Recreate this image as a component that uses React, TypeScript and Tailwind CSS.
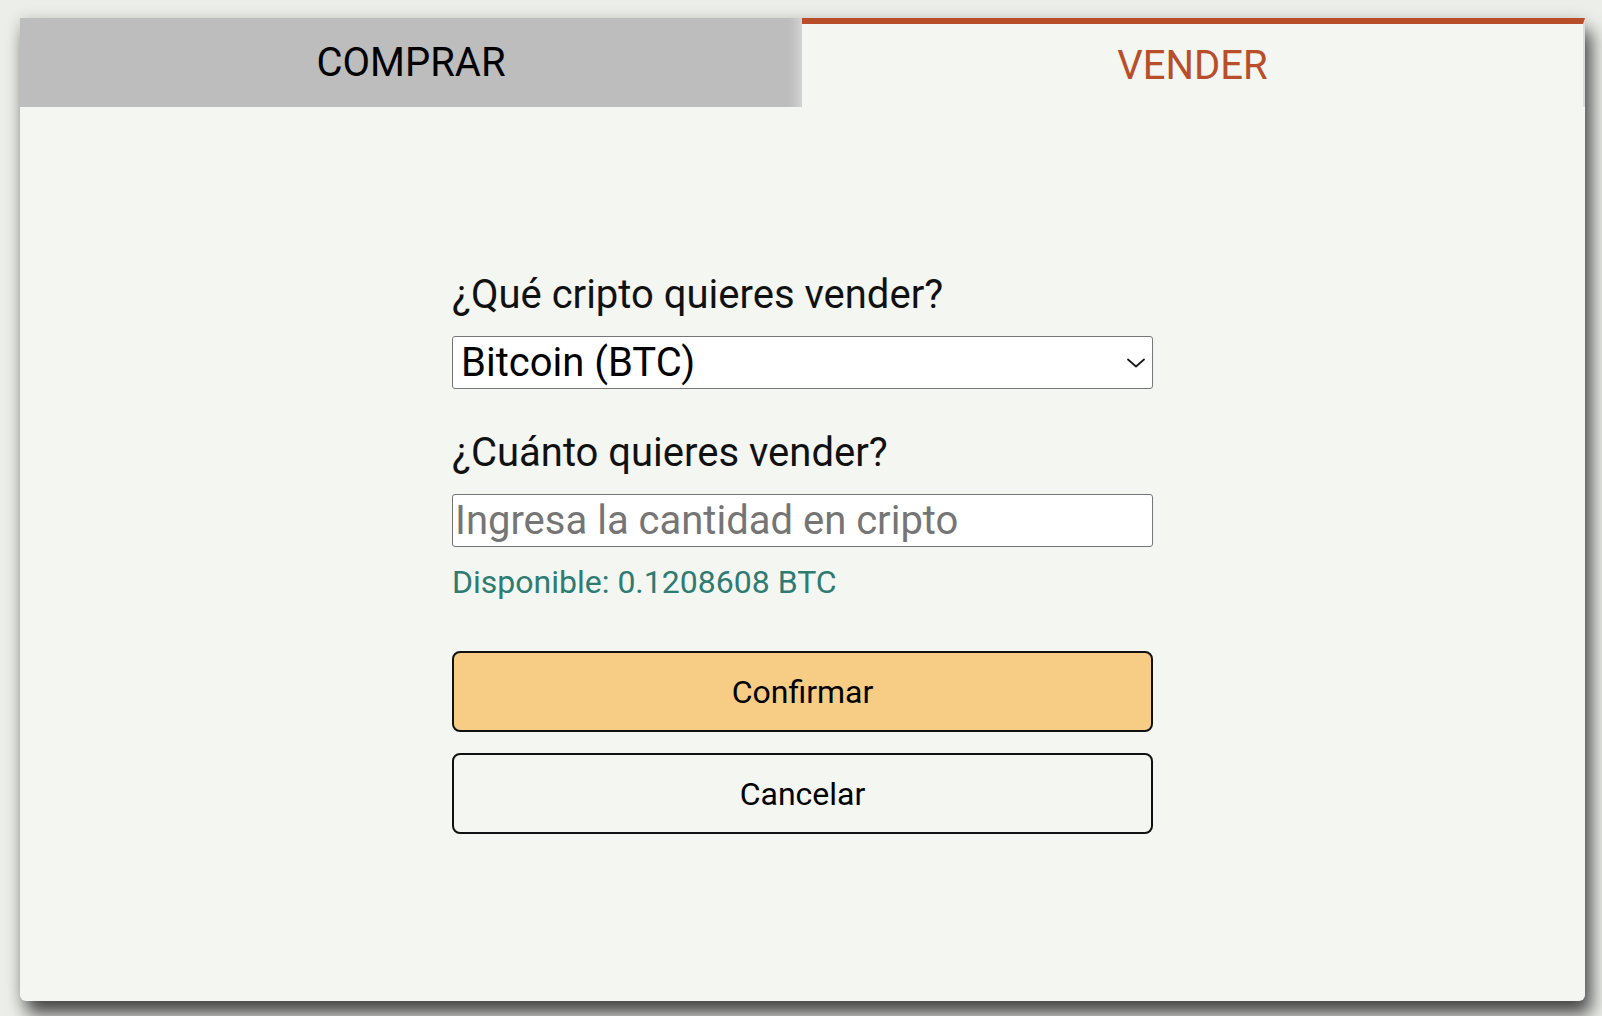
import React, { useState } from "react";

const font = { fontFamily: "Roboto, 'Noto Sans', Arial, sans-serif" };

function Chevron() {
  return (
    <svg width="18" height="10" viewBox="0 0 18 10" fill="none" className="pointer-events-none">
      <path d="M1 1.5 L9 8.5 L17 1.5" stroke="#1a1a1a" strokeWidth="1.8" strokeLinecap="round" strokeLinejoin="round" />
    </svg>
  );
}

export default function App() {
  const [tab, setTab] = useState<"comprar" | "vender">("vender");
  const [coin, setCoin] = useState("btc");
  const [amount, setAmount] = useState("");

  return (
    <div className="w-full h-[1016px] bg-[#eceee9] pt-[18px] pl-[20px] overflow-hidden" style={font}>
      <div className="w-[1565px] h-[983px] bg-[#f4f6f1] rounded-b-[6px] shadow-[6px_13px_18px_rgba(0,0,0,0.7),-2px_-2px_14px_rgba(0,0,0,0.08)] flex flex-col">
        {/* tab bar */}
        <div className="flex h-[89px]">
          <button
            onClick={() => setTab("comprar")}
            className="w-[782px] h-full bg-[#bdbdbd] text-[40px] leading-none text-black flex items-center justify-center shadow-[inset_-14px_0_12px_-10px_rgba(255,255,255,0.45)]"
          >
            COMPRAR
          </button>
          <button
            onClick={() => setTab("vender")}
            className="flex-1 h-full border-t-[6px] border-[#b84f2a] border-r-[2px] border-r-[#dcdcdc] text-[40px] leading-none text-[#b84f2a] flex items-center justify-center"
          >
            VENDER
          </button>
        </div>

        {/* sell form */}
        <div className="w-[701px] mx-auto pt-[164px] flex flex-col">
          <label className="text-[40px] leading-[48px] text-[#111]">¿Qué cripto quieres vender?</label>
          <div className="relative mt-[17px] h-[53px]">
            <select
              value={coin}
              onChange={(e) => setCoin(e.target.value)}
              className="appearance-none w-full h-full bg-white border border-[#767676] rounded-[3px] pl-[8px] pr-[40px] text-[40px] leading-[48px] text-black outline-none"
              style={font}
            >
              <option value="btc">Bitcoin (BTC)</option>
              <option value="eth">Ethereum (ETH)</option>
            </select>
            <div className="absolute right-[8px] top-[22px]">
              <Chevron />
            </div>
          </div>

          <label className="mt-[40px] text-[40px] leading-[48px] text-[#111]">¿Cuánto quieres vender?</label>
          <input
            value={amount}
            onChange={(e) => setAmount(e.target.value)}
            placeholder="Ingresa la cantidad en cripto"
            className="mt-[17px] h-[53px] w-full bg-white border border-[#767676] rounded-[3px] px-[2px] text-[40px] text-black placeholder:text-[#757575] outline-none"
            style={font}
          />
          <div className="mt-[16px] text-[32px] leading-[38px] text-[#2e7b72]">Disponible: 0.1208608 BTC</div>

          <button className="mt-[50px] h-[81px] w-full rounded-[8px] border-2 border-[#111] bg-[#f7cd85] text-[32px] text-black">
            Confirmar
          </button>
          <button className="mt-[21px] h-[81px] w-full rounded-[8px] border-2 border-[#111] bg-transparent text-[32px] text-black">
            Cancelar
          </button>
        </div>
      </div>
    </div>
  );
}
